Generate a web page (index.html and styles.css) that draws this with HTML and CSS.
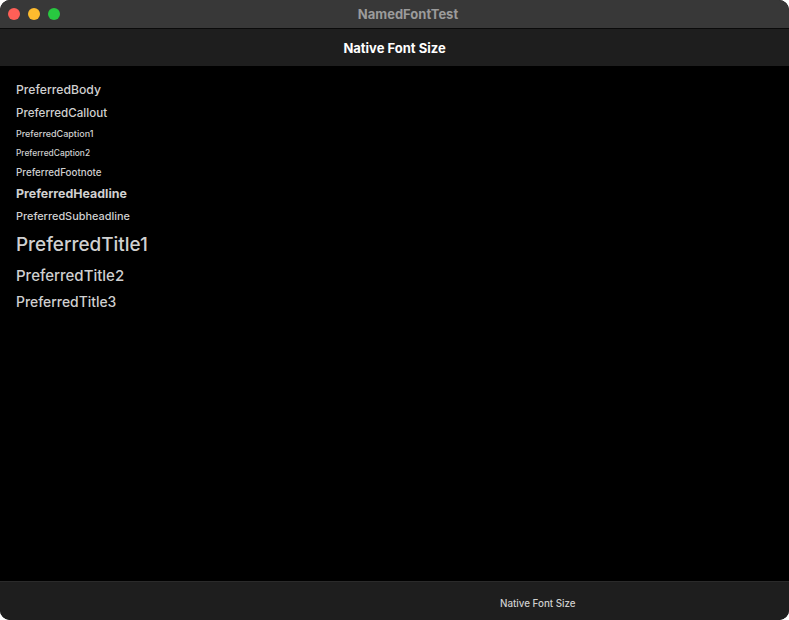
FILE: index.html
```html
<!DOCTYPE html>
<html>
<head>
<meta charset="utf-8">
<link rel="stylesheet" href="styles.css">
</head>
<body>
<div class="window">
  <div class="titlebar">
    <div class="lights">
      <span class="light red"></span>
      <span class="light yellow"></span>
      <span class="light green"></span>
    </div>
    <div class="title">NamedFontTest</div>
  </div>
  <div class="navbar">Native Font Size</div>
  <div class="content">
    <div class="item body-f">PreferredBody</div>
    <div class="item callout">PreferredCallout</div>
    <div class="item caption1">PreferredCaption1</div>
    <div class="item caption2">PreferredCaption2</div>
    <div class="item footnote">PreferredFootnote</div>
    <div class="item headline">PreferredHeadline</div>
    <div class="item subheadline">PreferredSubheadline</div>
    <div class="item title1">PreferredTitle1</div>
    <div class="item title2">PreferredTitle2</div>
    <div class="item title3">PreferredTitle3</div>
  </div>
  <div class="footer"><span class="footer-label">Native Font Size</span></div>
</div>
</body>
</html>
```
FILE: styles.css
```css
html, body {
  margin: 0;
  padding: 0;
  background: #ffffff;
}
body {
  width: 789px;
  height: 620px;
  font-family: Inter, "Noto Sans", sans-serif;
}
.window {
  width: 789px;
  height: 620px;
  border-radius: 10px;
  overflow: hidden;
  display: flex;
  flex-direction: column;
  background: #000;
}
.titlebar {
  height: 28px;
  background: #383838;
  border-bottom: 1px solid #0a0a0a;
  position: relative;
  display: flex;
  align-items: center;
  justify-content: center;
  flex-shrink: 0;
}
.lights {
  position: absolute;
  left: 8px;
  top: 8px;
  display: flex;
  gap: 8px;
}
.light {
  width: 12px;
  height: 12px;
  border-radius: 50%;
  display: block;
}
.red { background: #ff5f57; }
.yellow { background: #febc2e; }
.green { background: #28c840; }
.title {
  color: #9b9b9b;
  font-size: 13px;
  font-weight: 700;
  padding-left: 27px;
}
.navbar {
  height: 37px;
  background: #1e1e1e;
  border-bottom: 1px solid #000;
  display: flex;
  align-items: center;
  justify-content: center;
  color: #ffffff;
  font-size: 13px;
  font-weight: 700;
  flex-shrink: 0;
}
.content {
  flex: 1;
  background: #000;
  padding: 11px 0 0 16px;
  color: #d0d0d0;
  font-weight: 500;
}
.item { white-space: nowrap; }
.body-f { font-size: 12.2px; height: 24px; line-height: 24px; }
.callout { font-size: 11.6px; height: 22px; line-height: 22px; }
.caption1 { font-size: 9px; height: 20px; line-height: 20px; }
.caption2 { font-size: 8.4px; height: 19px; line-height: 19px; }
.footnote { font-size: 9.8px; height: 20px; line-height: 20px; }
.headline { font-size: 12.4px; font-weight: 700; height: 22px; line-height: 22px; }
.subheadline { font-size: 10.9px; height: 23px; line-height: 23px; }
.title1 { font-size: 18.9px; height: 34px; line-height: 34px; }
.title2 { font-size: 15px; height: 27px; line-height: 27px; }
.title3 { font-size: 13.9px; height: 26px; line-height: 26px; }
.footer {
  height: 39px;
  background: #1e1e1e;
  border-top: 1px solid #2a2a2a;
  display: flex;
  align-items: center;
  flex-shrink: 0;
  padding-left: 500px;
  padding-top: 5px;
  box-sizing: border-box;
}
.footer-label {
  color: #cfcfcf;
  font-size: 9.8px;
  font-weight: 500;
}
```
